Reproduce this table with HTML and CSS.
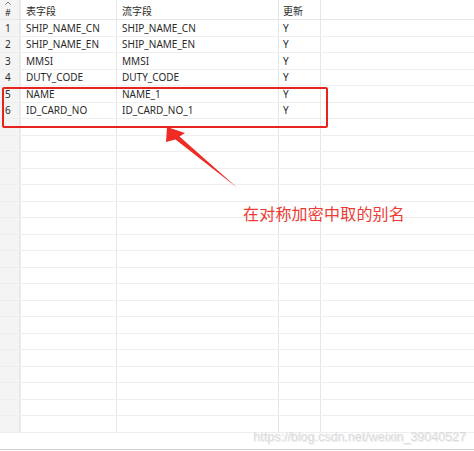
FILE: index.html
```html
<!DOCTYPE html>
<html>
<head>
<meta charset="utf-8">
<link rel="stylesheet" href="styles.css">
</head>
<body>
<div class="screen">
  <div class="grid">
    <div class="row head">
      <div class="c g"><svg class="caret" width="6" height="4" viewBox="0 0 6 4"><polyline points="0.5,3.5 3,1 5.5,3.5" fill="none" stroke="#777" stroke-width="1"/></svg>#</div>
      <div class="c c1">表字段</div>
      <div class="c c2">流字段</div>
      <div class="c c3">更新</div>
      <div class="c rest"></div>
    </div>
    <div class="row"><div class="c g">1</div><div class="c c1">SHIP_NAME_CN</div><div class="c c2">SHIP_NAME_CN</div><div class="c c3">Y</div><div class="c rest"></div></div>
    <div class="row"><div class="c g">2</div><div class="c c1">SHIP_NAME_EN</div><div class="c c2">SHIP_NAME_EN</div><div class="c c3">Y</div><div class="c rest"></div></div>
    <div class="row"><div class="c g">3</div><div class="c c1">MMSI</div><div class="c c2">MMSI</div><div class="c c3">Y</div><div class="c rest"></div></div>
    <div class="row"><div class="c g">4</div><div class="c c1">DUTY_CODE</div><div class="c c2">DUTY_CODE</div><div class="c c3">Y</div><div class="c rest"></div></div>
    <div class="row"><div class="c g">5</div><div class="c c1">NAME</div><div class="c c2">NAME_1</div><div class="c c3">Y</div><div class="c rest"></div></div>
    <div class="row"><div class="c g">6</div><div class="c c1">ID_CARD_NO</div><div class="c c2">ID_CARD_NO_1</div><div class="c c3">Y</div><div class="c rest"></div></div>
    <div class="row"><div class="c g"></div><div class="c c1"></div><div class="c c2"></div><div class="c c3"></div><div class="c rest"></div></div>
    <div class="row"><div class="c g"></div><div class="c c1"></div><div class="c c2"></div><div class="c c3"></div><div class="c rest"></div></div>
    <div class="row"><div class="c g"></div><div class="c c1"></div><div class="c c2"></div><div class="c c3"></div><div class="c rest"></div></div>
    <div class="row"><div class="c g"></div><div class="c c1"></div><div class="c c2"></div><div class="c c3"></div><div class="c rest"></div></div>
    <div class="row"><div class="c g"></div><div class="c c1"></div><div class="c c2"></div><div class="c c3"></div><div class="c rest"></div></div>
    <div class="row"><div class="c g"></div><div class="c c1"></div><div class="c c2"></div><div class="c c3"></div><div class="c rest"></div></div>
    <div class="row"><div class="c g"></div><div class="c c1"></div><div class="c c2"></div><div class="c c3"></div><div class="c rest"></div></div>
    <div class="row"><div class="c g"></div><div class="c c1"></div><div class="c c2"></div><div class="c c3"></div><div class="c rest"></div></div>
    <div class="row"><div class="c g"></div><div class="c c1"></div><div class="c c2"></div><div class="c c3"></div><div class="c rest"></div></div>
    <div class="row"><div class="c g"></div><div class="c c1"></div><div class="c c2"></div><div class="c c3"></div><div class="c rest"></div></div>
    <div class="row"><div class="c g"></div><div class="c c1"></div><div class="c c2"></div><div class="c c3"></div><div class="c rest"></div></div>
    <div class="row"><div class="c g"></div><div class="c c1"></div><div class="c c2"></div><div class="c c3"></div><div class="c rest"></div></div>
    <div class="row"><div class="c g"></div><div class="c c1"></div><div class="c c2"></div><div class="c c3"></div><div class="c rest"></div></div>
    <div class="row"><div class="c g"></div><div class="c c1"></div><div class="c c2"></div><div class="c c3"></div><div class="c rest"></div></div>
    <div class="row"><div class="c g"></div><div class="c c1"></div><div class="c c2"></div><div class="c c3"></div><div class="c rest"></div></div>
    <div class="row"><div class="c g"></div><div class="c c1"></div><div class="c c2"></div><div class="c c3"></div><div class="c rest"></div></div>
    <div class="row"><div class="c g"></div><div class="c c1"></div><div class="c c2"></div><div class="c c3"></div><div class="c rest"></div></div>
    <div class="row"><div class="c g"></div><div class="c c1"></div><div class="c c2"></div><div class="c c3"></div><div class="c rest"></div></div>
    <div class="row"><div class="c g"></div><div class="c c1"></div><div class="c c2"></div><div class="c c3"></div><div class="c rest"></div></div>
  </div>

  <div class="redbox"></div>
  <svg class="arrow" width="474" height="451" viewBox="0 0 474 451">
    <polygon points="167,127 185,133 179.5,136.5 237.5,188 175.5,139.5 166,142" fill="#ee2b24"/>
  </svg>
  <div class="note">在对称加密中取的别名</div>
  <div class="watermark">https://blog.csdn.net/weixin_39040527</div>
</div>
</body>
</html>
```
FILE: styles.css
```css
html, body {
  margin: 0;
  padding: 0;
  background: #ffffff;
}
.screen {
  position: relative;
  width: 474px;
  height: 451px;
  overflow: hidden;
  font-family: "Noto Sans", "Noto Sans CJK SC", sans-serif;
  font-size: 10px;
  color: #2a2a2a;
}
.grid {
  display: flex;
  flex-direction: column;
  height: 449px;
  border-bottom: 1px solid #cfcfcf;
  overflow: hidden;
}
.row {
  display: flex;
  height: 16.5px;
  flex: none;
  box-sizing: border-box;
  border-bottom: 1px solid #eeeeee;
}
.row.head {
  height: 20px;
  border-bottom: 1px solid #e6e6e6;
}
.c {
  box-sizing: border-box;
  height: 100%;
  display: flex;
  align-items: center;
  padding-left: 5px;
  white-space: nowrap;
  border-right: 1px solid #e6e6e6;
}
.head .c {
  font-family: "Noto Sans CJK SC", sans-serif;
  font-size: 10px;
  padding-top: 2px;
}
.g {
  width: 21px;
  padding-left: 5px;
  background: #f4f4f4;
  border-right: 2px solid #e9e9e9;
  position: relative;
}
.head .g {
  font-family: "Noto Sans", sans-serif;
  font-size: 9px;
  padding-left: 5px;
  padding-top: 5px;
}
.caret {
  position: absolute;
  left: 5px;
  top: 1px;
}
.c1 { width: 96px; }
.c2 { width: 162px; }
.c3 { width: 42px; padding-left: 4px; }
.rest { flex: 1; border-right: none; }

.redbox {
  position: absolute;
  left: 2px;
  top: 87px;
  width: 326px;
  height: 41px;
  box-sizing: border-box;
  border: 2px solid #e8231f;
  border-radius: 2px;
}
.arrow {
  position: absolute;
  left: 0;
  top: 0;
}
.note {
  position: absolute;
  left: 243px;
  top: 204px;
  font-family: "Noto Sans CJK SC", sans-serif;
  font-size: 16px;
  line-height: 18px;
  letter-spacing: 0.2px;
  color: #ec3b34;
}
.watermark {
  position: absolute;
  right: 8px;
  top: 429px;
  font-family: "Liberation Sans", sans-serif;
  font-size: 12.5px;
  line-height: 16px;
  color: #dadada;
  text-shadow: 0 0 1px #ffffff, 1px 1px 0 #ededed;
}
```
